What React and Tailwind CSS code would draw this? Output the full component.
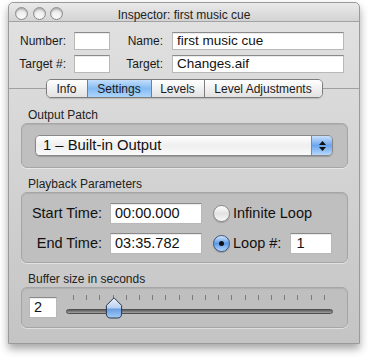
import React from 'react';

const font = { fontFamily: '"Liberation Sans", Arial, sans-serif' };

const TrafficLight = () => (
  <div className="w-[13px] h-[13px] rounded-full border border-[#8c8c8c] bg-gradient-to-b from-[#dcdcdc] via-[#f2f2f2] to-[#fafafa] shadow-[inset_0_1px_2px_rgba(0,0,0,0.3)]" />
);

const TextField = ({ className, children }) => (
  <div
    className={`bg-white border border-[#b8b8b8] border-t-[#8a8a8a] flex items-center text-[#111] shadow-[inset_0_1px_0_rgba(0,0,0,0.08)] ${className}`}
  >
    {children}
  </div>
);

const Radio = ({ checked }) =>
  checked ? (
    <div className="w-[17px] h-[17px] rounded-full border border-[#3b5680] bg-gradient-to-b from-[#d3e6fb] via-[#5c9ae6] to-[#b3d6fb] flex items-center justify-center shadow-[0_1px_1px_rgba(0,0,0,0.2)]">
      <div className="w-[5px] h-[5px] rounded-full bg-[#111]" />
    </div>
  ) : (
    <div className="w-[17px] h-[17px] rounded-full border border-[#8a8a8a] bg-gradient-to-b from-[#ffffff] via-[#e2e2e2] to-[#f8f8f8] shadow-[0_1px_1px_rgba(0,0,0,0.2)]" />
  );

const Group = ({ label, className, children }) => (
  <div className="flex flex-col">
    <div className="pl-[19px] h-[17px] flex items-center text-[12px] text-[#222]">{label}</div>
    <div
      className={`ml-[12px] mr-[11px] rounded-[6px] border border-[#a6a6a6] bg-[#bfbfbf] shadow-[inset_0_1px_1px_rgba(0,0,0,0.08),0_1px_0_rgba(255,255,255,0.45)] ${className}`}
    >
      {children}
    </div>
  </div>
);

const Knob = () => (
  <svg width="18" height="22" viewBox="0 0 18 22" className="block">
    <defs>
      <linearGradient id="knob" x1="0" y1="0" x2="0" y2="1">
        <stop offset="0" stopColor="#eef3fb" />
        <stop offset="0.5" stopColor="#b9d0ef" />
        <stop offset="0.56" stopColor="#6a9ee2" />
        <stop offset="1" stopColor="#a3cbf6" />
      </linearGradient>
    </defs>
    <path
      d="M9 0.8 L16.6 8.4 L16.6 16.5 Q16.6 21 12.4 21 L5.6 21 Q1.4 21 1.4 16.5 L1.4 8.4 Z"
      fill="url(#knob)"
      stroke="#26364f"
      strokeWidth="1"
    />
  </svg>
);

export default function App() {
  const ticks = Array.from({ length: 20 }, (_, i) => i);
  return (
    <div className="w-[368px] h-[357px] bg-white overflow-hidden" style={font}>
      <div className="ml-[8px] mt-[2px] w-[352px] h-[342px] rounded-t-[5px] flex flex-col border border-[#9a9a9a] shadow-[0_5px_8px_rgba(0,0,0,0.35)] bg-gradient-to-b from-[#e2e2e2] to-[#c4c4c4]">
        {/* Title bar */}
        <div className="h-[19px] shrink-0 flex items-center pt-[3px] rounded-t-[5px] bg-gradient-to-b from-[#eaeaea] to-[#d3d3d3] border-b border-[#a2a2a2]">
          <div className="w-[62px] flex gap-[4.5px] pl-[6px]">
            <TrafficLight />
            <TrafficLight />
            <TrafficLight />
          </div>
          <div className="flex-1 text-center text-[12px] text-[#222] pt-[2px]">Inspector: first music cue</div>
          <div className="w-[62px]" />
        </div>

        {/* Fields */}
        <div className="flex flex-col gap-[5px] pt-[10px] text-[#1a1a1a]">
          <div className="flex items-center h-[18px]">
            <div className="w-[57px] text-right text-[12px]">Number:</div>
            <TextField className="ml-[8px] w-[36px] h-[18px]" />
            <div className="w-[53px] text-right text-[12px]">Name:</div>
            <TextField className="ml-[9px] w-[172px] h-[18px] pl-[4px] text-[13.5px]">first music cue</TextField>
          </div>
          <div className="flex items-center h-[18px]">
            <div className="w-[57px] text-right text-[12px]">Target #:</div>
            <TextField className="ml-[8px] w-[36px] h-[18px]" />
            <div className="w-[53px] text-right text-[12px]">Target:</div>
            <TextField className="ml-[9px] w-[172px] h-[18px] pl-[4px] text-[13.5px]">Changes.aif</TextField>
          </div>
        </div>

        {/* Tabs */}
        <div className="flex items-center mt-[6px] h-[19px]">
          <div className="flex-1 h-px bg-[#a0a0a0]" />
          <div className="flex h-[19px] rounded-[5px] border border-[#7d7d7d] overflow-hidden text-[12px] text-[#1a1a1a] shadow-[0_1px_1px_rgba(0,0,0,0.15)]">
            <div className="w-[40px] flex items-center justify-center bg-gradient-to-b from-[#ffffff] to-[#e2e2e2]">Info</div>
            <div className="w-[64px] flex items-center justify-center border-l border-[#7d7d7d] bg-gradient-to-b from-[#c3defb] via-[#84bbf3] to-[#add5fb]">Settings</div>
            <div className="w-[53px] flex items-center justify-center border-l border-[#7d7d7d] bg-gradient-to-b from-[#ffffff] to-[#e2e2e2]">Levels</div>
            <div className="w-[118px] flex items-center justify-center border-l border-[#7d7d7d] bg-gradient-to-b from-[#ffffff] to-[#e2e2e2]">Level Adjustments</div>
          </div>
          <div className="flex-1 h-px bg-[#a0a0a0]" />
        </div>

        {/* Output Patch */}
        <div className="mt-[8px]">
          <Group label="Output Patch" className="h-[45px] flex items-center pl-[13px]">
            <div className="w-[298px] h-[21px] rounded-[5px] border border-[#888] flex overflow-hidden shadow-[0_1px_1px_rgba(0,0,0,0.2)]">
              <div className="flex-1 flex items-center pl-[7px] text-[14.8px] text-[#111] bg-gradient-to-b from-[#ffffff] via-[#efefef] to-[#fafafa]">
                1 – Built-in Output
              </div>
              <div className="w-[21px] flex flex-col items-center justify-center gap-[2px] border-l border-[#7288ad] bg-gradient-to-b from-[#c9e0fa] via-[#69a5ee] to-[#b7d8fb]">
                <svg width="7" height="4" viewBox="0 0 7 4"><path d="M3.5 0 L7 4 L0 4 Z" fill="#111" /></svg>
                <svg width="7" height="4" viewBox="0 0 7 4"><path d="M0 0 L7 0 L3.5 4 Z" fill="#111" /></svg>
              </div>
            </div>
          </Group>
        </div>

        {/* Playback Parameters */}
        <div className="mt-[7px]">
          <Group label="Playback Parameters" className="h-[71px] flex flex-col pt-[10px] gap-[9px] text-[14.5px] text-[#111]">
            <div className="flex items-center h-[21px]">
              <div className="w-[80px] text-right">Start Time:</div>
              <TextField className="ml-[8px] w-[92px] h-[21px] pl-[4px]">00:00.000</TextField>
              <div className="ml-[11px]"><Radio /></div>
              <div className="ml-[3px]">Infinite Loop</div>
            </div>
            <div className="flex items-center h-[21px]">
              <div className="w-[80px] text-right">End Time:</div>
              <TextField className="ml-[8px] w-[92px] h-[21px] pl-[4px]">03:35.782</TextField>
              <div className="ml-[11px]"><Radio checked /></div>
              <div className="ml-[3px]">Loop #:</div>
              <TextField className="ml-[9px] w-[42px] h-[21px] pl-[5px]">1</TextField>
            </div>
          </Group>
        </div>

        {/* Buffer size */}
        <div className="mt-[7px]">
          <Group label="Buffer size in seconds" className="h-[41px] flex items-start text-[14.5px] text-[#111]">
            <TextField className="ml-[7px] mt-[9px] w-[28px] h-[21px] pl-[4px]">2</TextField>
            <div className="ml-[9px] w-[267px] flex flex-col">
              <div className="flex justify-between pl-[7px] pr-[8px] h-[5px] mt-[7px]">
                {ticks.map((t) => (
                  <div key={t} className="w-px h-[5px] bg-[#7c7c7c]" />
                ))}
              </div>
              <div className="relative mt-[9px] h-[5px] rounded-full bg-gradient-to-b from-[#5c5c5c] to-[#a3a3a3] border border-[#505050]">
                <div className="absolute left-[38px] top-[-13px]">
                  <Knob />
                </div>
              </div>
            </div>
          </Group>
        </div>
      </div>
    </div>
  );
}
